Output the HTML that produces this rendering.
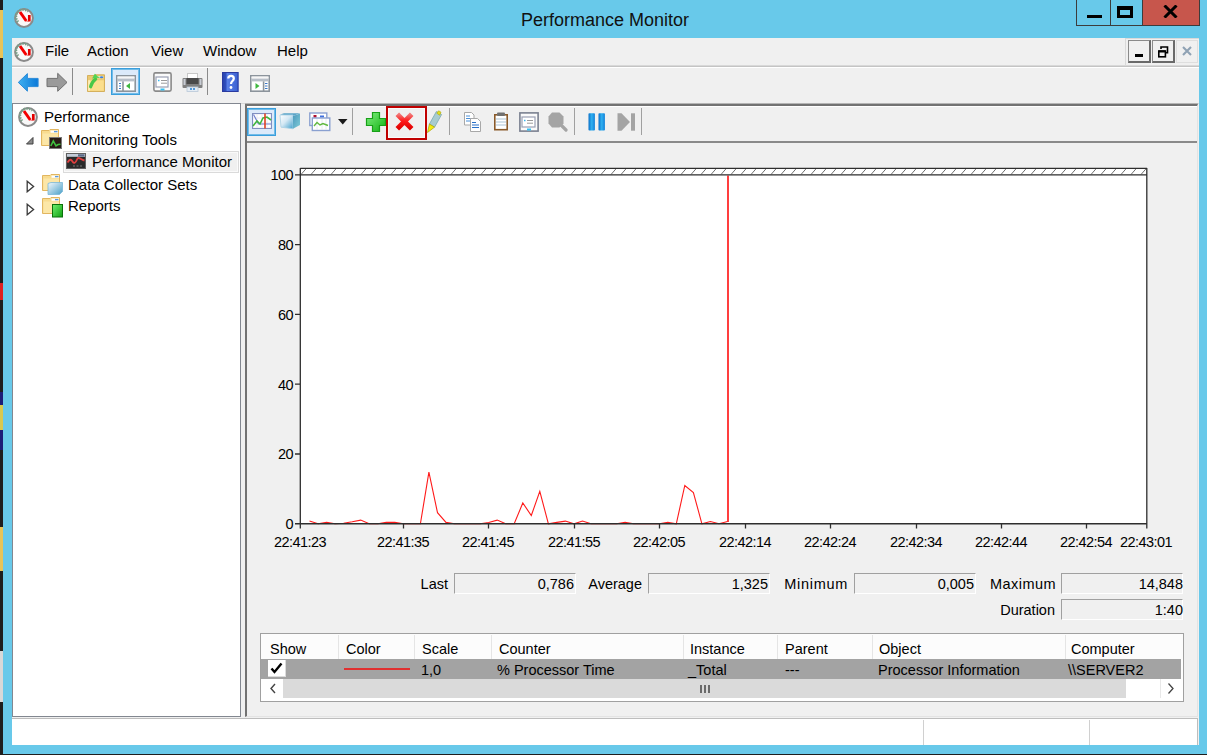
<!DOCTYPE html>
<html><head><meta charset="utf-8">
<style>
*{margin:0;padding:0;box-sizing:border-box}
html,body{width:1207px;height:755px;overflow:hidden}
body{position:relative;background:#68c9ea;font-family:"Liberation Sans",sans-serif;font-size:15px;color:#000}
.a{position:absolute}
.t{position:absolute;white-space:nowrap;line-height:1}
.yl{left:240px;width:53px;text-align:right;font-size:14.5px;letter-spacing:-0.6px}
.xl{width:60px;text-align:center;top:535px;font-size:14.5px;letter-spacing:-0.55px}
.sl{font-size:14.5px}
.sv{text-align:right;font-size:14.5px}
.sb{background:#f0f0f0;border-top:1px solid #a0a0a0;border-left:1px solid #a0a0a0;border-bottom:1px solid #fff;border-right:1px solid #fff}
.hs{top:635px;width:1px;height:24px;background:#e5e5e5}
.th{top:642px;font-size:14.5px}
.td{top:663px;font-size:14.5px}
.sep1{position:absolute;top:68px;width:1px;height:27px;background:#8a8a8a}
.sep2{position:absolute;top:108px;width:1px;height:27px;background:#a0a0a0}
</style></head><body>
<!-- left desktop strip -->
<div class="a" style="left:0;top:0;width:3px;height:755px;background:#1e1e1e"></div>
<div class="a" style="left:0;top:10px;width:3px;height:48px;background:#e8c458"></div>
<div class="a" style="left:0;top:160px;width:3px;height:30px;background:#050505"></div>
<div class="a" style="left:0;top:283px;width:3px;height:17px;background:#e02020"></div>
<div class="a" style="left:0;top:392px;width:3px;height:58px;background:#1c1c78"></div>
<div class="a" style="left:0;top:405px;width:3px;height:25px;background:#d8c850"></div>
<div class="a" style="left:0;top:527px;width:3px;height:44px;background:#e8c458"></div>
<div class="a" style="left:0;top:651px;width:3px;height:51px;background:#d8d8d8"></div>
<div class="a" style="left:0;top:754px;width:1207px;height:1px;background:#1e1e1e"></div>

<!-- title bar -->
<div class="t" style="left:521px;top:10.5px;font-size:18px;color:#111">Performance Monitor</div>
<div class="a" style="left:1076px;top:0;width:124px;height:26px;border:1px solid #3c3c3c;border-top:none;background:#68c9ea"></div>
<div class="a" style="left:1142px;top:0;width:58px;height:26px;border:1px solid #3c3c3c;border-top:none;background:#c7564c"></div>
<div class="a" style="left:1110px;top:0;width:1px;height:25px;background:#3c3c3c"></div>

<!-- client -->
<div class="a" style="left:12px;top:38px;width:1187px;height:707px;background:#f0f0f0"></div>

<!-- menu bar -->
<div class="t" style="left:45px;top:43px">File</div>
<div class="t" style="left:87px;top:43px">Action</div>
<div class="t" style="left:151px;top:43px">View</div>
<div class="t" style="left:203px;top:43px">Window</div>
<div class="t" style="left:277px;top:43px">Help</div>
<div class="a" style="left:12px;top:65px;width:1187px;height:1px;background:#d8d8d8"></div><div class="a" style="left:12px;top:66px;width:1187px;height:1px;background:#c4c4c4"></div>

<!-- toolbar line -->
<div class="a" style="left:12px;top:103px;width:1187px;height:1px;background:#d8d8d8"></div>

<!-- tree pane -->
<div class="a" style="left:12px;top:103px;width:229px;height:614px;background:#fff;border:1px solid #828790"></div>
<div class="t" style="left:44px;top:109px">Performance</div>
<div class="t" style="left:68px;top:132px">Monitoring Tools</div>
<div class="a" style="left:63px;top:151px;width:176px;height:22px;background:#f0f0f0;border:1px solid #dadada;box-shadow:inset 0 0 0 1px #fafafa"></div>
<div class="t" style="left:92px;top:154px">Performance Monitor</div>
<div class="t" style="left:68px;top:177px">Data Collector Sets</div>
<div class="t" style="left:68px;top:198px">Reports</div>

<!-- right pane -->
<div class="a" style="left:245px;top:103px;width:953px;height:1px;background:#b4b4b4"></div>
<div class="a" style="left:245px;top:104px;width:953px;height:613px;border-left:2px solid #727272;border-top:2px solid #727272;border-right:1px solid #e3e3e3;border-bottom:1px solid #e3e3e3;background:#f0f0f0"></div>
<div class="a" style="left:247px;top:106px;width:950px;height:35px;background:#f0f0f0"></div>
<div class="a" style="left:247px;top:141px;width:950px;height:2px;background:#8a8a8a"></div>


<!-- chart -->
<svg class="a" style="left:0;top:0" width="1207" height="755" viewBox="0 0 1207 755">
<rect x="300" y="168" width="847" height="356" fill="#fff"/>
<path d="M301.0 174.5L306.0 168.8M311.0 174.5L316.0 168.8M321.0 174.5L326.0 168.8M331.0 174.5L336.0 168.8M341.0 174.5L346.0 168.8M351.0 174.5L356.0 168.8M361.0 174.5L366.0 168.8M371.0 174.5L376.0 168.8M381.0 174.5L386.0 168.8M391.0 174.5L396.0 168.8M401.0 174.5L406.0 168.8M411.0 174.5L416.0 168.8M421.0 174.5L426.0 168.8M431.0 174.5L436.0 168.8M441.0 174.5L446.0 168.8M451.0 174.5L456.0 168.8M461.0 174.5L466.0 168.8M471.0 174.5L476.0 168.8M481.0 174.5L486.0 168.8M491.0 174.5L496.0 168.8M501.0 174.5L506.0 168.8M511.0 174.5L516.0 168.8M521.0 174.5L526.0 168.8M531.0 174.5L536.0 168.8M541.0 174.5L546.0 168.8M551.0 174.5L556.0 168.8M561.0 174.5L566.0 168.8M571.0 174.5L576.0 168.8M581.0 174.5L586.0 168.8M591.0 174.5L596.0 168.8M601.0 174.5L606.0 168.8M611.0 174.5L616.0 168.8M621.0 174.5L626.0 168.8M631.0 174.5L636.0 168.8M641.0 174.5L646.0 168.8M651.0 174.5L656.0 168.8M661.0 174.5L666.0 168.8M671.0 174.5L676.0 168.8M681.0 174.5L686.0 168.8M691.0 174.5L696.0 168.8M701.0 174.5L706.0 168.8M711.0 174.5L716.0 168.8M721.0 174.5L726.0 168.8M731.0 174.5L736.0 168.8M741.0 174.5L746.0 168.8M751.0 174.5L756.0 168.8M761.0 174.5L766.0 168.8M771.0 174.5L776.0 168.8M781.0 174.5L786.0 168.8M791.0 174.5L796.0 168.8M801.0 174.5L806.0 168.8M811.0 174.5L816.0 168.8M821.0 174.5L826.0 168.8M831.0 174.5L836.0 168.8M841.0 174.5L846.0 168.8M851.0 174.5L856.0 168.8M861.0 174.5L866.0 168.8M871.0 174.5L876.0 168.8M881.0 174.5L886.0 168.8M891.0 174.5L896.0 168.8M901.0 174.5L906.0 168.8M911.0 174.5L916.0 168.8M921.0 174.5L926.0 168.8M931.0 174.5L936.0 168.8M941.0 174.5L946.0 168.8M951.0 174.5L956.0 168.8M961.0 174.5L966.0 168.8M971.0 174.5L976.0 168.8M981.0 174.5L986.0 168.8M991.0 174.5L996.0 168.8M1001.0 174.5L1006.0 168.8M1011.0 174.5L1016.0 168.8M1021.0 174.5L1026.0 168.8M1031.0 174.5L1036.0 168.8M1041.0 174.5L1046.0 168.8M1051.0 174.5L1056.0 168.8M1061.0 174.5L1066.0 168.8M1071.0 174.5L1076.0 168.8M1081.0 174.5L1086.0 168.8M1091.0 174.5L1096.0 168.8M1101.0 174.5L1106.0 168.8M1111.0 174.5L1116.0 168.8M1121.0 174.5L1126.0 168.8M1131.0 174.5L1136.0 168.8M1141.0 174.5L1146.0 168.8" stroke="#606060" stroke-width="0.9" fill="none"/>
<path d="M728 175.5V522" stroke="#ff2a2a" stroke-width="1.8"/>
<polyline points="309.5,521.1 318.1,523.8 326.6,522.4 335.1,523.8 343.6,523.2 352.2,521.8 360.7,520.1 369.2,523.8 377.8,523.8 386.3,522.4 394.8,522.4 403.4,523.8 411.9,523.8 420.4,523.8 428.9,472.2 437.5,512.7 446.0,522.4 454.5,523.8 463.1,523.8 471.6,523.8 480.1,523.8 488.7,522.5 497.2,520.1 505.7,523.8 514.2,523.8 522.8,503.0 531.3,515.5 539.8,491.4 548.4,523.8 556.9,522.4 565.4,521.1 574.0,523.8 582.5,521.1 591.0,523.8 599.5,523.8 608.1,523.8 616.6,523.8 625.1,522.4 633.7,523.8 642.2,523.8 650.7,523.8 659.3,523.8 667.8,522.4 676.3,523.8 684.8,485.5 693.4,492.5 701.9,523.8 710.4,521.5 719.0,523.8 727.5,521.5" fill="none" stroke="#ff1a1a" stroke-width="1.1"/>
<path d="M300.3 168.4H1147M300.3 174.8H1147M300.3 168V528.5M1146.8 168V528.5M403.5 524V528.5M488.5 524V528.5M574.5 524V528.5M659.5 524V528.5M745.5 524V528.5M830.5 524V528.5M916.5 524V528.5M1001.5 524V528.5M1086.5 524V528.5M295 174.8H300M295 244.6H300M295 314.4H300M295 384.2H300M295 454.0H300" stroke="#2e2e2e" stroke-width="1.3" fill="none"/>
<path d="M295 523.8H1147" stroke="#2e2e2e" stroke-width="1.6" fill="none"/>
</svg>
<div class="t yl" style="top:168px">100</div>
<div class="t yl" style="top:238px">80</div>
<div class="t yl" style="top:308px">60</div>
<div class="t yl" style="top:378px">40</div>
<div class="t yl" style="top:447px">20</div>
<div class="t yl" style="top:517px">0</div>
<div class="t xl" style="left:270px">22:41:23</div>
<div class="t xl" style="left:373px">22:41:35</div>
<div class="t xl" style="left:458px">22:41:45</div>
<div class="t xl" style="left:544px">22:41:55</div>
<div class="t xl" style="left:629px">22:42:05</div>
<div class="t xl" style="left:715px">22:42:14</div>
<div class="t xl" style="left:800px">22:42:24</div>
<div class="t xl" style="left:886px">22:42:34</div>
<div class="t xl" style="left:971px">22:42:44</div>
<div class="t xl" style="left:1056px">22:42:54</div>
<div class="t xl" style="left:1116px">22:43:01</div>

<!-- stats -->
<div class="t sl" style="left:298px;width:150px;text-align:right;letter-spacing:0;top:577px">Last</div>
<div class="a sb" style="left:454px;top:573px;width:122px;height:21px"></div>
<div class="t sv" style="left:454px;width:120px;top:577px">0,786</div>
<div class="t sl" style="left:492px;width:150px;text-align:right;letter-spacing:0;top:577px">Average</div>
<div class="a sb" style="left:648px;top:573px;width:122px;height:21px"></div>
<div class="t sv" style="left:648px;width:120px;top:577px">1,325</div>
<div class="t sl" style="left:698px;width:150px;text-align:right;letter-spacing:0.7px;top:577px">Minimum</div>
<div class="a sb" style="left:854px;top:573px;width:122px;height:21px"></div>
<div class="t sv" style="left:854px;width:120px;top:577px">0,005</div>
<div class="t sl" style="left:906px;width:150px;text-align:right;letter-spacing:0.45px;top:577px">Maximum</div>
<div class="a sb" style="left:1061px;top:573px;width:122px;height:21px"></div>
<div class="t sv" style="left:1061px;width:122px;top:577px">14,848</div>
<div class="t sl" style="left:905px;width:150px;text-align:right;letter-spacing:0;top:603px">Duration</div>
<div class="a sb" style="left:1061px;top:599px;width:122px;height:21px"></div>
<div class="t sv" style="left:1061px;width:122px;top:603px">1:40</div>

<!-- table -->
<div class="a" style="left:260px;top:633px;width:924px;height:69px;border:1px solid #a0a0a0;background:#fff"></div>
<div class="a" style="left:261px;top:634px;width:922px;height:25px;background:#fcfcfc"></div>
<div class="a hs" style="left:338px"></div>
<div class="a hs" style="left:414px"></div>
<div class="a hs" style="left:491px"></div>
<div class="a hs" style="left:683px"></div>
<div class="a hs" style="left:777px"></div>
<div class="a hs" style="left:872px"></div>
<div class="a hs" style="left:1065px"></div>
<div class="t th" style="left:270px">Show</div>
<div class="t th" style="left:346px">Color</div>
<div class="t th" style="left:422px">Scale</div>
<div class="t th" style="left:499px">Counter</div>
<div class="t th" style="left:690px">Instance</div>
<div class="t th" style="left:785px">Parent</div>
<div class="t th" style="left:879px">Object</div>
<div class="t th" style="left:1071px">Computer</div>
<div class="a" style="left:261px;top:659px;width:920px;height:20px;background:#a3a3a3"></div>
<div class="a" style="left:268px;top:660px;width:18px;height:17px;background:#fff;border-right:1px solid #dcdcdc;border-bottom:1px solid #dcdcdc"></div>
<svg class="a" style="left:268px;top:660px" width="18" height="17" viewBox="0 0 18 17"><path d="M3.5 8.5L6.5 12L13.5 3.5" stroke="#000" stroke-width="2.4" fill="none"/></svg>
<div class="a" style="left:344px;top:668px;width:66px;height:2px;background:#e03030"></div>
<div class="t td" style="left:421px">1,0</div>
<div class="t td" style="left:497px">% Processor Time</div>
<div class="t td" style="left:688px">_Total</div>
<div class="t td" style="left:785px">---</div>
<div class="t td" style="left:878px">Processor Information</div>
<div class="t td" style="left:1068px">\\SERVER2</div>
<div class="a" style="left:261px;top:679px;width:920px;height:19px;background:#dadada"></div>
<div class="a" style="left:261px;top:679px;width:22px;height:19px;background:#fff"></div>
<div class="a" style="left:1126px;top:679px;width:55px;height:19px;background:#fff"></div>
<div class="a" style="left:1160px;top:679px;width:1px;height:19px;background:#e8e8e8"></div>
<svg class="a" style="left:261px;top:679px" width="22" height="19" viewBox="0 0 22 19"><path d="M14 5L10 9.5L14 14" stroke="#444" stroke-width="1.4" fill="none"/></svg>
<svg class="a" style="left:1160px;top:679px" width="21" height="19" viewBox="0 0 21 19"><path d="M8.5 4.5L13 9.5L8.5 14.5" stroke="#444" stroke-width="1.3" fill="none"/></svg>
<div class="a" style="left:700px;top:685px;width:2px;height:8px;background:#6a6a6a;box-shadow:4px 0 0 #6a6a6a,8px 0 0 #6a6a6a"></div>

<!-- ICONS START -->
<!-- title bar icon -->
<svg class="a" style="left:14px;top:8px" width="20" height="20" viewBox="0 0 20 20">
<circle cx="10" cy="10" r="8.9" fill="#f8f8f8" stroke="#8a8a8a" stroke-width="2"/>
<path d="M4.2 13.8A6.6 6.6 0 0 1 14 3.6" stroke="#78a088" stroke-width="2.4" stroke-dasharray="1.5 1.1" fill="none"/>
<path d="M6 4L12.3 13" stroke="#f40000" stroke-width="3"/>
<path d="M15.3 7V13.5" stroke="#e40000" stroke-width="2.7"/>
<path d="M12.3 13.4H15" stroke="#f06060" stroke-width="0.8"/>
</svg>
<!-- menu icon -->
<svg class="a" style="left:14px;top:42px" width="20" height="20" viewBox="0 0 20 20">
<circle cx="10" cy="10" r="8.9" fill="#f8f8f8" stroke="#8a8a8a" stroke-width="2"/>
<path d="M4.2 13.8A6.6 6.6 0 0 1 14 3.6" stroke="#78a088" stroke-width="2.4" stroke-dasharray="1.5 1.1" fill="none"/>
<path d="M6 4L12.3 13" stroke="#f40000" stroke-width="3"/>
<path d="M15.3 7V13.5" stroke="#e40000" stroke-width="2.7"/>
<path d="M12.3 13.4H15" stroke="#f06060" stroke-width="0.8"/>
</svg>

<!-- title buttons glyphs -->
<div class="a" style="left:1087px;top:15px;width:15px;height:3px;background:#000"></div>
<div class="a" style="left:1117px;top:6px;width:16px;height:12px;border:3px solid #000;border-top-width:4px"></div>
<svg class="a" style="left:1163px;top:5px" width="15" height="13" viewBox="0 0 15 13"><path d="M1.5 0.5L13.5 12.5M13.5 0.5L1.5 12.5" stroke="#000" stroke-width="3"/></svg>

<!-- MDI buttons -->
<div class="a" style="left:1125px;top:38px;width:74px;height:28px;border-left:1px solid #d9d9d9;border-top:1px solid #d9d9d9"></div>
<div class="a" style="left:1128px;top:40px;width:23px;height:23px;border:1px solid #8a8a8a;border-right:2px solid #6a6a6a;border-bottom:2px solid #6a6a6a;background:#f0f0f0"></div>
<div class="a" style="left:1152px;top:40px;width:23px;height:23px;border:1px solid #8a8a8a;border-right:2px solid #6a6a6a;border-bottom:2px solid #6a6a6a;background:#f0f0f0"></div>
<div class="a" style="left:1135px;top:54px;width:8px;height:3px;background:#000"></div>
<svg class="a" style="left:1157px;top:46px" width="12" height="12" viewBox="0 0 12 12"><path d="M4 3V1H10.5V6.8H8.5" stroke="#000" stroke-width="1.6" fill="none"/><rect x="1.8" y="5" width="6.6" height="5.8" stroke="#000" stroke-width="1.6" fill="none"/><path d="M1.8 5.5H8.4" stroke="#000" stroke-width="2"/></svg>
<div class="a" style="left:1176px;top:40px;width:22px;height:23px;border:1px solid #dedede"></div><svg class="a" style="left:1182px;top:46px" width="10" height="10" viewBox="0 0 10 10"><path d="M1 1L9 9M9 1L1 9" stroke="#8fa2b4" stroke-width="2.1"/></svg>

<!-- main toolbar -->
<div class="a" style="left:12px;top:67px;width:1187px;height:1px;background:#fff"></div>
<svg class="a" style="left:17px;top:72px" width="23" height="21" viewBox="0 0 23 21">
<defs><linearGradient id="gb" x1="0" y1="0" x2="1" y2="0"><stop offset="0" stop-color="#3fb0f0"/><stop offset="1" stop-color="#0a78d8"/></linearGradient></defs>
<path d="M1.3 10.4L10.4 1.6V6.4H21.1V14.6H10.4V19.2Z" fill="url(#gb)" stroke="#2a8ad8" stroke-width="1"/>
</svg>
<svg class="a" style="left:45px;top:72px" width="23" height="21" viewBox="0 0 23 21">
<path d="M22 10.4L12.7 1.3V6.4H2V14.6H12.7V19.3Z" fill="#9a9a9a" stroke="#707070" stroke-width="1"/>
</svg>
<div class="a sep1" style="left:72px"></div>
<svg class="a" style="left:87px;top:72px" width="18" height="20" viewBox="0 0 18 20">
<path d="M0.5 3.5H7L8 2.8H17.5V19.5H0.5Z" fill="#eac872" stroke="#d2aa52" stroke-width="0.9"/>
<path d="M1.2 8.3H16.8V18.8H1.2Z" fill="#fbde8c"/>
<path d="M1.2 8.3H3V18.8H1.2Z" fill="#fdeeb8"/>
<rect x="10" y="4.2" width="6.2" height="1.9" fill="#fff"/>
<ellipse cx="14.6" cy="5.2" rx="1.8" ry="0.95" fill="#3a80e0"/>
<path d="M3.6 14.8C4.6 11.2 6.2 8.8 8.6 7.2" stroke="#48c848" stroke-width="3.2" stroke-linecap="round" fill="none"/>
<path d="M5 6.6L7.9 1.8L11.8 5.6Z" fill="#52d452"/>
<path d="M9.6 5.3H12.6" stroke="#60d060" stroke-width="1.3"/>
</svg>
<div class="a" style="left:111px;top:68px;width:29px;height:27px;background:#dceafa;border:1px solid #3a9edc;box-shadow:inset 0 0 0 1px #72bce8"></div>
<svg class="a" style="left:116px;top:75px" width="20" height="17" viewBox="0 0 20 17">
<rect x="0.8" y="0.8" width="18.4" height="15.4" fill="#fff" stroke="#8c949c" stroke-width="1.6"/>
<rect x="1.5" y="1.5" width="17" height="2" fill="#f6f6f6"/>
<rect x="1.5" y="3.6" width="17" height="2.8" fill="#b8bfc8"/>
<rect x="6.2" y="6.4" width="1.6" height="10" fill="#8c949c"/>
<path d="M3 8.5H5M3 11H5M3 13.5H5" stroke="#3a78c8" stroke-width="1.2"/>
<path d="M10 11L14 8V14Z" fill="#40b840"/>
</svg>
<svg class="a" style="left:153px;top:72px" width="19" height="20" viewBox="0 0 19 20">
<rect x="0.9" y="0.9" width="17.2" height="18.2" rx="1.5" fill="#fafafa" stroke="#8a8a8a" stroke-width="1.6"/>
<rect x="3" y="5" width="12" height="10" fill="#fff" stroke="#9aa0b4" stroke-width="1.2"/>
<path d="M5 8.5H6.5" stroke="#38b8f0" stroke-width="1.6"/>
<path d="M8 8.5H14M8 11.2H14" stroke="#9a9a9a" stroke-width="1"/>
<rect x="7.5" y="16.5" width="4" height="2" fill="#38c0f0"/>
</svg>
<svg class="a" style="left:182px;top:73px" width="21" height="19" viewBox="0 0 21 19">
<rect x="5.5" y="0.5" width="10" height="5.5" fill="#fff" stroke="#c8c8c8"/>
<rect x="0.5" y="5" width="20" height="10" rx="1" fill="#808080"/>
<rect x="4.5" y="5" width="12" height="6" fill="#4a4a4a"/>
<rect x="1.5" y="6" width="2" height="6" fill="#c8ccd4"/><rect x="17.5" y="6" width="2" height="6" fill="#c8ccd4"/>
<rect x="5" y="14" width="11" height="4.5" fill="#e4ecf4" stroke="#b8c8d8" stroke-width="0.8"/>
<path d="M9 15V17M12 15V17" stroke="#1a78d0" stroke-width="1.4"/>
</svg>
<div class="a sep1" style="left:207px"></div>
<svg class="a" style="left:222px;top:72px" width="17" height="20" viewBox="0 0 17 20">
<defs><linearGradient id="hb" x1="0" y1="0" x2="1" y2="0"><stop offset="0" stop-color="#2840a8"/><stop offset="0.25" stop-color="#3050c0"/><stop offset="0.3" stop-color="#5a80e8"/><stop offset="1" stop-color="#3a60d0"/></linearGradient></defs>
<rect x="0" y="0" width="16.5" height="20" fill="url(#hb)"/>
<rect x="0.5" y="0.5" width="15.5" height="19" fill="none" stroke="#2a3aa0" stroke-width="1"/>
<path d="M6.3 6.5C6.3 3 11.8 3 11.8 6.5C11.8 9 9 9.2 9 12" stroke="#fff" stroke-width="2.2" fill="none"/>
<circle cx="9" cy="15.5" r="1.4" fill="#fff"/>
</svg>
<svg class="a" style="left:250px;top:75px" width="20" height="17" viewBox="0 0 20 17">
<rect x="0.8" y="0.8" width="18.4" height="15.4" fill="#fff" stroke="#8c949c" stroke-width="1.6"/>
<rect x="1.5" y="1.5" width="17" height="2" fill="#f6f6f6"/>
<rect x="1.5" y="3.6" width="17" height="2.8" fill="#b8bfc8"/>
<rect x="12.8" y="6.4" width="1.6" height="10" fill="#8c949c"/>
<path d="M15 8.5H17.5M15 11H17.5M15 13.5H17.5" stroke="#3a78c8" stroke-width="1.2"/>
<path d="M5.5 8V14L9.5 11Z" fill="#40b840"/>
</svg>

<!-- tree icons -->
<svg class="a" style="left:18px;top:107px" width="20" height="20" viewBox="0 0 20 20">
<circle cx="10" cy="10" r="8.9" fill="#f8f8f8" stroke="#8a8a8a" stroke-width="2"/>
<path d="M4.2 13.8A6.6 6.6 0 0 1 14 3.6" stroke="#78a088" stroke-width="2.4" stroke-dasharray="1.5 1.1" fill="none"/>
<path d="M6 4L12.3 13" stroke="#f40000" stroke-width="3"/>
<path d="M15.3 7V13.5" stroke="#e40000" stroke-width="2.7"/>
<path d="M12.3 13.4H15" stroke="#f06060" stroke-width="0.8"/>
</svg>
<svg class="a" style="left:25px;top:136px" width="9" height="9" viewBox="0 0 9 9"><path d="M8 1.5V8H1.5Z" fill="#8a8a8a" stroke="#404040" stroke-width="1"/></svg>
<svg class="a" style="left:41px;top:129px" width="22" height="21" viewBox="0 0 22 21">
<path d="M0.5 1.5H8L9 0.5H17.5V16.5H0.5Z" fill="#f8dc90" stroke="#e2b660"/><path d="M1.5 4.5H17V16H1.5Z" fill="#fce7a8"/>
<rect x="9.5" y="1.5" width="7.5" height="2.3" fill="#fff"/><path d="M13 2.6H16.5" stroke="#5a9ae0" stroke-width="1.3"/>
<rect x="8.5" y="8.5" width="12" height="11" fill="#281c16" stroke="#7a7a7a"/>
<path d="M9.8 17L12.3 12L15 16.8L17 15.5L19.5 15.2" stroke="#40c040" stroke-width="1.6" fill="none"/>
</svg>
<svg class="a" style="left:66px;top:153px" width="20" height="16" viewBox="0 0 20 16">
<rect x="0.5" y="0.5" width="19" height="15" fill="#2a2a2a" stroke="#606060"/>
<rect x="1" y="1" width="18" height="2.8" fill="#c4ccd8"/><rect x="12" y="1.3" width="6.5" height="2.2" fill="#5a6a88"/>
<path d="M1.5 9.5C3.5 6 5 6 6.5 8.5S9.5 10 11 6.5S14 6.5 18.5 7.5" stroke="#e04040" stroke-width="1.8" fill="none"/>
<path d="M7 13H9M10.5 13H12.5M14 13H16" stroke="#7a7a7a" stroke-width="1"/>
</svg>
<svg class="a" style="left:26px;top:180px" width="9" height="13" viewBox="0 0 9 13"><path d="M1.2 1.2L7.6 6.5L1.2 11.8Z" fill="#fff" stroke="#3a3a3a" stroke-width="1.3"/></svg>
<svg class="a" style="left:42px;top:174px" width="21" height="21" viewBox="0 0 21 21">
<path d="M0.5 1.5H8L9 0.5H17.5V16.5H0.5Z" fill="#f8dc90" stroke="#e2b660"/><path d="M1.5 4.5H17V16H1.5Z" fill="#fce7a8"/>
<rect x="9.5" y="1.5" width="7.5" height="2.3" fill="#fff"/><path d="M13 2.6H16.5" stroke="#5a9ae0" stroke-width="1.3"/>
<defs><linearGradient id="cb" x1="0" y1="0" x2="1" y2="1"><stop offset="0" stop-color="#f4f8fc"/><stop offset="1" stop-color="#4aa0c8"/></linearGradient></defs>
<path d="M6 9.5L9 8.5H20.5V17.5L17.5 20.5H6Z" fill="url(#cb)" stroke="#7ab8d8" stroke-width="0.8"/>
</svg>
<svg class="a" style="left:26px;top:203px" width="9" height="13" viewBox="0 0 9 13"><path d="M1.2 1.2L7.6 6.5L1.2 11.8Z" fill="#fff" stroke="#3a3a3a" stroke-width="1.3"/></svg>
<svg class="a" style="left:42px;top:197px" width="21" height="21" viewBox="0 0 21 21">
<path d="M0.5 1.5H8L9 0.5H17.5V16.5H0.5Z" fill="#f8dc90" stroke="#e2b660"/><path d="M1.5 4.5H17V16H1.5Z" fill="#fce7a8"/>
<rect x="9.5" y="1.5" width="7.5" height="2.3" fill="#fff"/><path d="M13 2.6H16.5" stroke="#5a9ae0" stroke-width="1.3"/>
<defs><linearGradient id="gbk" x1="0" y1="0" x2="1" y2="1"><stop offset="0" stop-color="#70f070"/><stop offset="1" stop-color="#10a010"/></linearGradient></defs>
<rect x="10.5" y="7.5" width="10" height="12.5" fill="url(#gbk)" stroke="#0a700a"/>
</svg>

<!-- perfmon toolbar -->
<div class="a" style="left:247px;top:106px;width:950px;height:1px;background:#fff"></div>
<div class="a" style="left:247px;top:108px;width:29px;height:28px;background:#dceafa;border:1px solid #3a9edc;box-shadow:inset 0 0 0 1px #72bce8"></div>
<svg class="a" style="left:252px;top:113px" width="20" height="16" viewBox="0 0 20 16">
<rect x="0.5" y="0.5" width="19" height="15" fill="#fff" stroke="#8090c0" stroke-width="1.2"/>
<path d="M5 1V15M10 1V15M15 1V15M1 5H19M1 10H19" stroke="#e4e8f0" stroke-width="0.8"/>
<path d="M1.5 1.5L6.5 11H19" stroke="#7080d0" stroke-width="1.2" fill="none"/>
<path d="M1 13L5 8L8 11L11 5L15 4L19 7" stroke="#40b840" stroke-width="1.6" fill="none"/>
<path d="M13 0.5V15.5" stroke="#e04020" stroke-width="1.6"/>
</svg>
<svg class="a" style="left:279px;top:112px" width="22" height="18" viewBox="0 0 22 18">
<defs><linearGradient id="cuf" x1="0" y1="0" x2="1" y2="1"><stop offset="0" stop-color="#ffffff"/><stop offset="0.45" stop-color="#d4e8f4"/><stop offset="1" stop-color="#40a0cc"/></linearGradient>
<linearGradient id="cur" x1="0" y1="0" x2="1" y2="1"><stop offset="0" stop-color="#4a98bc"/><stop offset="1" stop-color="#80ccd8"/></linearGradient></defs>
<path d="M1 2.5L5 1.2H21L14 4Z" fill="#5aa4c8"/>
<path d="M1 3H14V16.8L2 15.2Z" fill="url(#cuf)" stroke="#a8d0e4" stroke-width="0.8"/>
<path d="M14 4L21 1.5V13L14 16.8Z" fill="url(#cur)"/>
</svg>
<svg class="a" style="left:309px;top:112px" width="22" height="20" viewBox="0 0 22 20">
<rect x="0.8" y="1" width="17" height="12.5" fill="#fff" stroke="#8aa0d0" stroke-width="1.4"/>
<rect x="4.5" y="3" width="3" height="2.6" fill="#b01030"/><rect x="11" y="3.5" width="4" height="2" fill="#4070e0"/>
<rect x="3.3" y="6" width="17.5" height="12.5" fill="#fff" stroke="#8aa0d0" stroke-width="1.4"/>
<path d="M8 7V18M13 7V18M17 7V18" stroke="#e0e4ec" stroke-width="0.8"/>
<path d="M5 14L8 10.5L11 13L14 11.5L19 13.5" stroke="#60b840" stroke-width="1.4" fill="none"/>
</svg>
<svg class="a" style="left:338px;top:119px" width="10" height="6" viewBox="0 0 10 6"><path d="M0 0H9.5L4.75 5.5Z" fill="#1a1a1a"/></svg>
<div class="a sep2" style="left:352px"></div>
<svg class="a" style="left:365px;top:111px" width="22" height="22" viewBox="0 0 22 22">
<defs><linearGradient id="gp" x1="0" y1="0" x2="1" y2="1"><stop offset="0" stop-color="#80f080"/><stop offset="1" stop-color="#10b010"/></linearGradient></defs>
<path d="M7.5 1.5H14.5V7.5H20.5V14.5H14.5V20.5H7.5V14.5H1.5V7.5H7.5Z" fill="url(#gp)" stroke="#18a018" stroke-width="1.2"/>
</svg>
<div class="a" style="left:386px;top:106px;width:41px;height:34px;border:2px solid #c00000;background:#f0f0f0;box-shadow:inset 0 0 0 1px #fafafa"></div>
<svg class="a" style="left:393px;top:110px" width="23" height="23" viewBox="0 0 23 23">
<defs><linearGradient id="xg" x1="0" y1="0" x2="0" y2="1"><stop offset="0" stop-color="#f07878"/><stop offset="0.45" stop-color="#ff1a1a"/><stop offset="1" stop-color="#e00000"/></linearGradient></defs>
<path d="M4.3 4.3L18.7 18.7M18.7 4.3L4.3 18.7" stroke="url(#xg)" stroke-width="5"/>
</svg>
<svg class="a" style="left:426px;top:110px" width="18" height="24" viewBox="0 0 18 24">
<path d="M3.4 14.1L10.4 1.5L15.6 4.5L8.6 17.1Z" fill="#a8ccd0" stroke="#7aa8b0" stroke-width="0.8"/>
<path d="M10.8 3.2L12.6 0.8L15 2.2L13.6 5.2Z" fill="#e0e020" stroke="#b0a800" stroke-width="0.6"/>
<path d="M1.5 22.5L3.4 14.1L8.6 17.1Z" fill="#f4ec10" stroke="#a8a000" stroke-width="0.7"/>
</svg>
<div class="a sep2" style="left:449px"></div>
<svg class="a" style="left:464px;top:112px" width="18" height="20" viewBox="0 0 18 20">
<path d="M0.5 0.5H7.5L10 3V13H0.5Z" fill="#fff" stroke="#a8a8a8"/>
<path d="M2 4H6M2 6.5H8M2 9H8" stroke="#4a90d8" stroke-width="1"/>
<path d="M6.5 6.5H13.5L16.5 9.5V19.5H6.5Z" fill="#fff" stroke="#a8a8a8"/>
<path d="M8 10.5H12M8 13H15M8 15.5H15" stroke="#2a70c8" stroke-width="1.2"/>
</svg>
<svg class="a" style="left:493px;top:112px" width="16" height="19" viewBox="0 0 16 19">
<rect x="1" y="2" width="14" height="16.5" fill="#8a5a2a"/>
<rect x="2.6" y="3.6" width="10.8" height="13.3" fill="#fff"/>
<path d="M3 7H13M3 10H13M3 13H13" stroke="#c8d8e4" stroke-width="1.4"/>
<rect x="4" y="0.5" width="8" height="3.5" rx="1" fill="#707070"/>
</svg>
<svg class="a" style="left:519px;top:112px" width="20" height="20" viewBox="0 0 20 20">
<rect x="0.9" y="0.9" width="18.2" height="18.2" fill="#fafafa" stroke="#7a8090" stroke-width="1.6"/>
<rect x="3" y="5" width="13" height="10" fill="#fff" stroke="#9aa0b4" stroke-width="1.2"/>
<path d="M5 8.5H6.5" stroke="#38b8f0" stroke-width="1.6"/>
<path d="M8 8.5H14M8 11.2H14" stroke="#9a9a9a" stroke-width="1"/>
<rect x="8" y="16.5" width="4" height="2" fill="#38c0f0"/>
</svg>
<svg class="a" style="left:548px;top:112px" width="20" height="20" viewBox="0 0 20 20">
<path d="M4 0.5H11.5L15.5 4.5V11.5L11.5 15.5H4L0.5 11.5V4.5Z" fill="#a4a4a4"/>
<path d="M12 12L18 18" stroke="#a4a4a4" stroke-width="3.2" stroke-linecap="round"/>
</svg>
<div class="a sep2" style="left:574px"></div>
<svg class="a" style="left:588px;top:113px" width="18" height="18" viewBox="0 0 18 18">
<defs><linearGradient id="pb" x1="0" y1="0" x2="1" y2="0"><stop offset="0" stop-color="#0a70c8"/><stop offset="0.5" stop-color="#30b0f0"/><stop offset="1" stop-color="#1080d8"/></linearGradient></defs>
<rect x="0.5" y="0.3" width="6.4" height="17.3" rx="0.8" fill="url(#pb)"/>
<rect x="10.5" y="0.3" width="6.4" height="17.3" rx="0.8" fill="url(#pb)"/>
</svg>
<svg class="a" style="left:617px;top:113px" width="19" height="18" viewBox="0 0 19 18">
<path d="M0.5 0.3H4.5L13 9L4.5 17.7H0.5Z" fill="#a4a4a4"/>
<rect x="14" y="0.3" width="4" height="17.4" fill="#a4a4a4"/>
</svg>
<div class="a sep2" style="left:641px"></div>
<!-- ICONS END -->
<!-- status bar -->
<div class="a" style="left:12px;top:718px;width:1186px;height:27px;background:#fff;border-top:1px solid #bdbdbd;border-right:1px solid #bdbdbd"></div>
<div class="a" style="left:923px;top:720px;width:1px;height:25px;background:#d0d0d0"></div>
<div class="a" style="left:1089px;top:720px;width:1px;height:25px;background:#d0d0d0"></div>

</body></html>
